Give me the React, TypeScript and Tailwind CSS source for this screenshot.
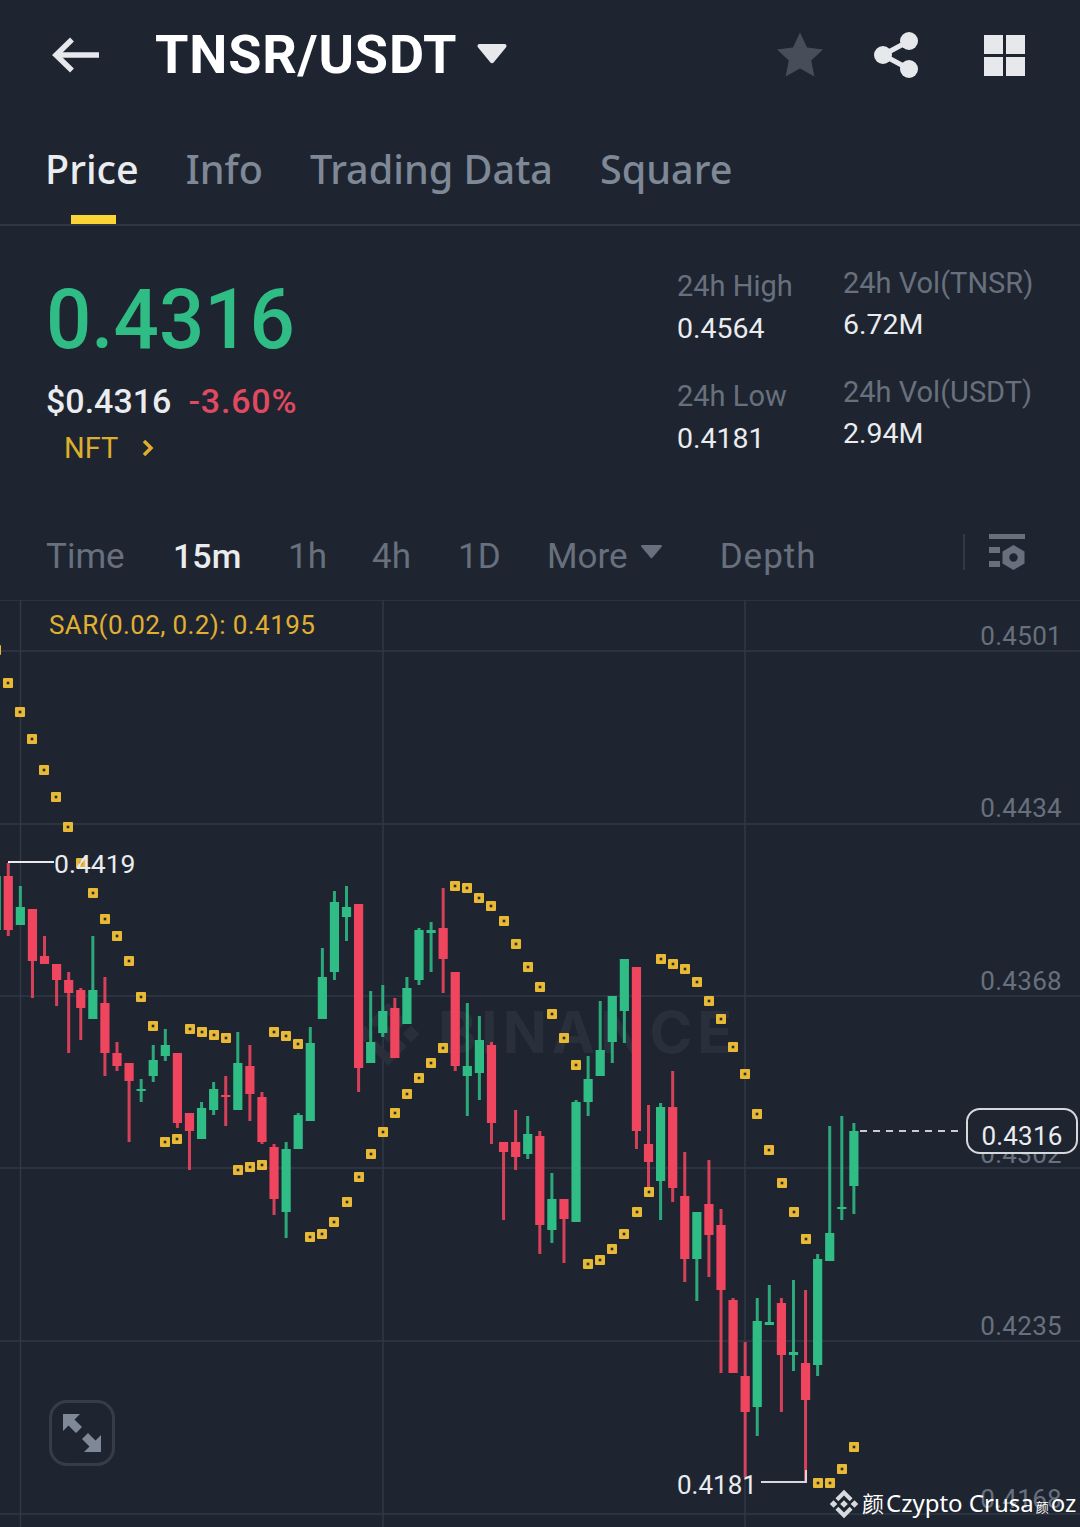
import { Fragment } from "react";

const GREEN = "#2fbc85";
const RED = "#f0455f";

// x step is constant, so each candle is [wickTop, bodyTop, bodyBottom, wickBottom, "g" | "r"]
const candles: [number, number, number, number, "g" | "r"][] = [
  [868, 876, 930, 943, "g"],
  [863, 876, 930, 936, "r"],
  [886, 907, 925, 925, "g"],
  [909, 909, 961, 998, "r"],
  [936, 956, 964, 964, "r"],
  [964, 964, 980, 1006, "r"],
  [972, 980, 993, 1053, "r"],
  [988, 990, 1008, 1040, "r"],
  [936, 990, 1019, 1019, "g"],
  [977, 1003, 1053, 1076, "r"],
  [1042, 1053, 1066, 1071, "r"],
  [1063, 1063, 1081, 1142, "r"],
  [1079, 1089, 1091, 1102, "g"],
  [1045, 1060, 1076, 1082, "g"],
  [1029, 1045, 1056, 1061, "g"],
  [1053, 1053, 1123, 1128, "r"],
  [1113, 1113, 1131, 1170, "r"],
  [1102, 1108, 1139, 1139, "g"],
  [1082, 1089, 1110, 1115, "g"],
  [1076, 1095, 1097, 1126, "r"],
  [1032, 1063, 1110, 1110, "g"],
  [1045, 1066, 1094, 1121, "r"],
  [1092, 1097, 1142, 1144, "r"],
  [1144, 1147, 1199, 1215, "r"],
  [1142, 1149, 1212, 1238, "g"],
  [1113, 1115, 1149, 1149, "g"],
  [1027, 1043, 1121, 1121, "g"],
  [948, 977, 1019, 1019, "g"],
  [891, 902, 972, 980, "g"],
  [886, 907, 917, 941, "g"],
  [904, 904, 1068, 1092, "r"],
  [991, 1042, 1063, 1063, "g"],
  [985, 1011, 1033, 1037, "g"],
  [998, 1008, 1058, 1058, "r"],
  [977, 988, 1024, 1024, "g"],
  [928, 930, 980, 985, "g"],
  [922, 930, 933, 972, "g"],
  [888, 928, 959, 993, "r"],
  [972, 972, 1066, 1071, "r"],
  [1003, 1066, 1076, 1116, "g"],
  [1016, 1040, 1073, 1100, "g"],
  [1042, 1045, 1123, 1144, "r"],
  [1142, 1142, 1152, 1220, "r"],
  [1110, 1142, 1157, 1170, "r"],
  [1116, 1134, 1154, 1159, "g"],
  [1131, 1136, 1225, 1254, "r"],
  [1173, 1199, 1230, 1243, "g"],
  [1199, 1199, 1219, 1263, "r"],
  [1100, 1102, 1222, 1222, "g"],
  [1056, 1079, 1102, 1116, "g"],
  [1001, 1050, 1076, 1076, "g"],
  [996, 996, 1042, 1063, "g"],
  [959, 959, 1011, 1043, "g"],
  [967, 967, 1131, 1149, "r"],
  [1105, 1144, 1162, 1187, "r"],
  [1103, 1107, 1181, 1220, "g"],
  [1071, 1107, 1188, 1202, "r"],
  [1152, 1196, 1259, 1282, "r"],
  [1212, 1212, 1259, 1301, "g"],
  [1160, 1204, 1235, 1277, "r"],
  [1209, 1225, 1290, 1373, "r"],
  [1298, 1300, 1373, 1373, "r"],
  [1342, 1376, 1412, 1477, "r"],
  [1298, 1321, 1407, 1436, "g"],
  [1285, 1322, 1325, 1325, "g"],
  [1298, 1303, 1355, 1412, "r"],
  [1280, 1352, 1355, 1371, "g"],
  [1290, 1363, 1400, 1482, "r"],
  [1254, 1259, 1365, 1376, "g"],
  [1126, 1233, 1261, 1261, "g"],
  [1116, 1207, 1209, 1220, "g"],
  [1123, 1131, 1186, 1214, "g"],
];

const sar: [number, number][] = [
  [-4, 650], [8, 683], [20, 712], [32, 739], [44, 770], [56, 797], [68, 827], [81, 863], [93, 893], [105, 919],
  [117, 936], [129, 961], [141, 997], [153, 1026], [165, 1142], [177, 1139], [190, 1029], [202, 1032], [214, 1035],
  [226, 1038], [238, 1170], [250, 1167], [262, 1165], [274, 1032], [286, 1036], [298, 1044], [310, 1237], [322, 1234],
  [334, 1222], [347, 1202], [359, 1177], [371, 1154], [383, 1132], [395, 1113], [407, 1094], [419, 1078], [431, 1063],
  [443, 1048], [455, 886], [467, 888], [479, 898], [491, 906], [504, 921], [516, 944], [528, 967], [540, 987],
  [552, 1014], [564, 1038], [576, 1065], [588, 1264], [600, 1260], [612, 1249], [624, 1234], [637, 1212], [649, 1192],
  [661, 959], [673, 964], [685, 969], [697, 982], [709, 1001], [721, 1019], [733, 1047], [745, 1074], [757, 1114],
  [769, 1150], [782, 1183], [794, 1212], [806, 1239], [818, 1483], [830, 1483], [842, 1469], [854, 1447],
];

const axis = [
  { label: "0.4501", top: "top-[21px]" },
  { label: "0.4434", top: "top-[193px]" },
  { label: "0.4368", top: "top-[366px]" },
  { label: "0.4302", top: "top-[539px]" },
  { label: "0.4235", top: "top-[711px]" },
  { label: "0.4168", top: "top-[884px]" },
];

function BinanceMark({ x, y, s, fill }: { x: number; y: number; s: number; fill: string }) {
  return (
    <g transform={`translate(${x} ${y}) scale(${s})`} fill={fill}>
      <path d="M0 -4 4 0 0 4 -4 0Z" />
      <path d="M-11 -4 -7 0 -11 4 -15 0Z" />
      <path d="M11 -4 15 0 11 4 7 0Z" />
      <path d="M0 -15 9 -6 6 -3 0 -9 -6 -3 -9 -6Z" />
      <path d="M0 15 9 6 6 3 0 9 -6 3 -9 6Z" />
    </g>
  );
}

function Chart() {
  return (
    <svg viewBox="0 600 1080 927" className="block h-full w-full">
      <line x1="0" x2="1080" y1="600" y2="600" stroke="#2b323d" strokeWidth="2" />
      {[651, 824, 996, 1168, 1341, 1514].map((y) => (
        <line key={y} x1="0" x2="1080" y1={y} y2={y} stroke="#323946" strokeWidth="1.5" />
      ))}
      {[20.5, 383, 745].map((x) => (
        <line key={x} x1={x} x2={x} y1="600" y2="1527" stroke="#323946" strokeWidth="1.5" />
      ))}

      <BinanceMark x={388} y={1034} s={2.1} fill="#2a303b" />
      <text x="438" y="1053" fill="#2a303b" fontFamily="Inter, sans-serif" fontWeight="700" fontSize="58" letterSpacing="5">
        BINANCE
      </text>

      {candles.map(([wt, bt, bb, wb, c], i) => {
        const x = -3.8 + 12.08 * i;
        const color = c === "g" ? GREEN : RED;
        return (
          <Fragment key={i}>
            <rect x={x - 1.5} y={wt} width="3" height={wb - wt} fill={color} opacity="0.88" />
            <rect x={x - 4.6} y={bt} width="9.2" height={bb - bt} fill={color} />
          </Fragment>
        );
      })}

      {sar.map(([x, y], i) => (
        <Fragment key={i}>
          <rect x={x - 5} y={y - 5} width="10" height="10" rx="1" fill="#e7b934" />
          <rect x={x - 1.3} y={y - 1.3} width="2.6" height="2.6" fill="#2a2a2c" />
        </Fragment>
      ))}

      <line x1="8" x2="54" y1="862" y2="862" stroke="#e8eaed" strokeWidth="2" />
      <path d="M761 1482H806V1470" fill="none" stroke="#d5d8dc" strokeWidth="2" />
      <line x1="860" x2="962" y1="1131" y2="1131" stroke="#c9cdd3" strokeWidth="2" strokeDasharray="7 6" />
      <BinanceMark x={844} y={1504} s={0.95} fill="#d8dade" />
    </svg>
  );
}

export default function App() {
  return (
    <div className="flex h-[1527px] w-[1080px] flex-col overflow-hidden bg-[#1e2530] font-['Roboto',sans-serif] text-[#eaecef]">
      <header className="flex h-[110px] items-center pl-[52px] pr-[55px]">
        <svg width="48" height="36" viewBox="0 0 48 36" fill="none" stroke="#e6e8ec" strokeWidth="5.5">
          <path d="M47 18H5" />
          <path d="M20 2.5 4 18l16 15.5" />
        </svg>
        <h1 className="ml-[55px] text-[54px] font-bold leading-none tracking-[0.8px] text-white">TNSR/USDT</h1>
        <svg width="30" height="21" viewBox="0 0 30 21" className="ml-[20px] mb-[3px]">
          <path d="M2.5 1h25a2 2 0 0 1 1.6 3.2L16.6 19.4a2 2 0 0 1-3.2 0L.9 4.2A2 2 0 0 1 2.5 1Z" fill="#e6e8ec" />
        </svg>
        <div className="ml-auto flex items-center">
          <svg width="48" height="48" viewBox="0 0 24 24" fill="#474e5a">
            <path d="M12 .8l3.5 7.4 8 1-5.9 5.5 1.6 8L12 18.8l-7.2 3.9 1.6-8L.5 9.2l8-1z" />
          </svg>
          <svg width="46" height="46" viewBox="0 0 46 46" className="ml-[50px]" fill="#e6e8ec">
            <circle cx="35" cy="9" r="9" />
            <circle cx="9" cy="23" r="9" />
            <circle cx="35" cy="37" r="9" />
            <path d="M35 9 9 23l26 14" fill="none" stroke="#e6e8ec" strokeWidth="5" />
          </svg>
          <div className="ml-[64px] grid h-[41px] w-[41px] grid-cols-2 gap-[3px]">
            <div className="bg-[#e6e8ec]" />
            <div className="bg-[#e6e8ec]" />
            <div className="bg-[#e6e8ec]" />
            <div className="bg-[#e6e8ec]" />
          </div>
        </div>
      </header>

      <nav className="flex h-[116px] gap-[47px] border-b-2 border-[#303743] pl-[45px] pt-[35px] font-['Noto_Sans',sans-serif] text-[39.6px] font-medium leading-[48px] text-[#7f8896]">
        <div className="relative h-full text-[#eaecef]">
          Price
          <div className="absolute bottom-0 left-[26px] h-[9px] w-[45px] bg-[#fcd535]" />
        </div>
        <div>Info</div>
        <div>Trading Data</div>
        <div>Square</div>
      </nav>

      <section className="flex h-[294px] pl-[46px]">
        <div className="w-[631px] pt-[50px]">
          <div className="origin-left scale-x-95 text-[84px] font-medium leading-[88px] text-[#2fbc85]">0.4316</div>
          <div className="mt-[16px] flex items-center text-[34px] font-medium leading-[42px]">
            <span className="text-[#eaecef]">$0.4316</span>
            <span className="ml-[17px] tracking-[0.8px] text-[#e04a61]">-3.60%</span>
          </div>
          <div className="ml-[18px] mt-[8px] flex items-center text-[29px] leading-[36px] text-[#dcae2c]">
            NFT
            <svg width="14" height="18" viewBox="0 0 14 18" fill="none" stroke="#dcae2c" strokeWidth="3.5" className="ml-[23px]">
              <path d="M3 2l7 7-7 7" />
            </svg>
          </div>
        </div>
        <div className="w-[166px] pt-[41px] text-[29px] leading-[38px]">
          <div className="text-[#68707d]">24h High</div>
          <div className="mt-[5px] text-[28.5px] text-[#eaecef]">0.4564</div>
          <div className="mt-[29px] text-[#68707d]">24h Low</div>
          <div className="mt-[5px] text-[28.5px] text-[#eaecef]">0.4181</div>
        </div>
        <div className="pt-[38px] text-[29px] leading-[38px]">
          <div className="text-[#68707d]">24h Vol(TNSR)</div>
          <div className="mt-[4px] text-[28.5px] text-[#eaecef]">6.72M</div>
          <div className="mt-[29px] text-[#68707d]">24h Vol(USDT)</div>
          <div className="mt-[4px] text-[28.5px] text-[#eaecef]">2.94M</div>
        </div>
      </section>

      <div className="flex h-[80px] items-center pb-[8px] pl-[46px] text-[35px] leading-none text-[#68707d]">
        <span className="w-[127px]">Time</span>
        <span className="w-[115px] text-[34px] font-medium text-[#eaecef]">15m</span>
        <span className="w-[84px]">1h</span>
        <span className="w-[86px]">4h</span>
        <span className="w-[89px]">1D</span>
        <span>More</span>
        <svg width="21" height="14" viewBox="0 0 21 14" className="ml-[13px] mb-[8px]">
          <path d="M1 0h19a1 1 0 0 1 .7 1.7L11.2 13a1 1 0 0 1-1.4 0L.3 1.7A1 1 0 0 1 1 0Z" fill="#68707d" />
        </svg>
        <span className="ml-[58px] tracking-[1px]">Depth</span>
        <div className="mb-[8px] ml-auto mr-[54px] flex items-center">
          <div className="mr-[24px] h-[36px] w-[2px] bg-[#323946]" />
          <svg width="37" height="36" viewBox="0 0 37 36">
            <rect x="0" y="0" width="36" height="5" fill="#68707d" />
            <rect x="0" y="13" width="11" height="6" fill="#68707d" />
            <rect x="0" y="27" width="11" height="6" fill="#68707d" />
            <path d="M24.5 11l11 6.5v12l-11 6.5-11-6.5v-12z" fill="#68707d" />
            <circle cx="24.5" cy="23.5" r="4.2" fill="#1e2530" />
          </svg>
        </div>
      </div>

      <div className="relative flex-1 overflow-hidden">
        <Chart />

        <span className="absolute left-[49px] top-[10px] text-[26px] leading-[30px] tracking-[0.4px] text-[#e0b030]">SAR(0.02, 0.2): 0.4195</span>

        {axis.map((a) => (
          <span key={a.label} className={`absolute right-[18px] text-[26px] leading-[30px] tracking-[0.3px] text-[#68707d] ${a.top}`}>
            {a.label}
          </span>
        ))}

        <span className="absolute left-[54px] top-[249px] text-[26.5px] leading-[30px] text-[#eaecef]">0.4419</span>
        <span className="absolute left-[677px] top-[870px] text-[26px] leading-[30px] text-[#eaecef]">0.4181</span>

        <div className="absolute left-[966px] top-[508px] flex h-[46px] w-[112px] items-center justify-center rounded-[14px] border-2 border-[#d5d8dc] bg-[#1e2530] pt-[10px] text-[26px] leading-none tracking-[0.2px] text-[#eaecef]">
          0.4316
        </div>

        <div className="absolute left-[49px] top-[800px] flex h-[66px] w-[66px] items-center justify-center rounded-[18px] border-[3px] border-[#363c48]">
          <svg width="40" height="40" viewBox="0 0 40 40" fill="#7f8896">
            <path d="M1 1h17l-5.5 5.5 7.5 7.5-6 6-7.5-7.5L1 18z" />
            <path d="M39 39H22l5.5-5.5-7.5-7.5 6-6 7.5 7.5L39 22z" />
          </svg>
        </div>

        <div className="absolute left-[862px] top-[886px] flex items-baseline whitespace-nowrap font-['Noto_Sans','Noto_Sans_CJK_SC',sans-serif] text-[24px] leading-[34px] text-white">
          <span className="w-[24px] text-[22px]">颜</span>
          <span>Czypto Crusa</span>
          <span className="mx-[2px] text-[13px]">颜</span>
          <span>oz</span>
        </div>
      </div>
    </div>
  );
}
